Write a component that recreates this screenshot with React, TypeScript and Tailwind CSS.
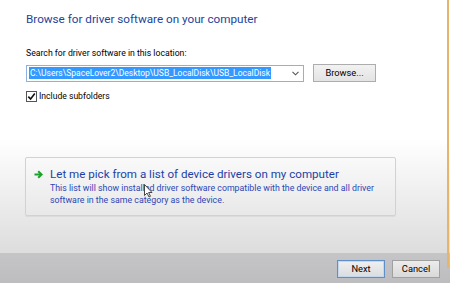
export default function App() {
  return (
    <div
      className="relative flex h-[283px] w-[450px] flex-col overflow-hidden"
      style={{ fontFamily: 'Roboto, "Noto Sans", sans-serif' }}
    >
      <div className="flex flex-1 flex-col bg-gradient-to-b from-white from-55% to-[#dddddd] pl-[26px] pr-[4px]">
        <h1 className="mt-[10px] text-[11.7px] leading-[18px] text-[#24439a]">
          Browse for driver software on your computer
        </h1>

        <p className="mt-[19px] text-[8.7px] leading-[12px] text-black">
          Search for driver software in this location:
        </p>

        <div className="mt-[5px] flex items-center gap-[9px]">
          <div className="flex h-[17px] w-[278px] items-center border border-[#8fb1e0] bg-white pl-[2px] pr-[4px]">
            <span className="bg-[#3399ff] px-[1px] text-[8.5px] leading-[12px] text-white">
              C:\Users\SpaceLover2\Desktop\USB_LocalDisk\USB_LocalDisk
            </span>
            <svg className="ml-auto" width="7" height="5" viewBox="0 0 7 5">
              <path d="M0.5 0.8 L3.5 3.8 L6.5 0.8" fill="none" stroke="#555" strokeWidth="1.1" />
            </svg>
          </div>
          <button className="flex h-[18px] w-[63px] items-center justify-center border border-[#adadad] bg-gradient-to-b from-[#f2f2f2] to-[#e3e3e3] text-[9.3px] text-black">
            Browse...
          </button>
        </div>

        <label className="mt-[8px] flex items-center gap-[2px] text-[8.6px] leading-[12px] text-black">
          <span className="flex h-[11px] w-[11px] items-center justify-center border border-[#555] bg-white">
            <svg width="9" height="9" viewBox="0 0 9 9">
              <path d="M1.3 4.6 L3.6 7 L7.8 1.6" fill="none" stroke="#111" strokeWidth="1.6" />
            </svg>
          </span>
          Include subfolders
        </label>

        <div className="-ml-[1px] mt-[55px] flex h-[59px] w-[371px] gap-[7px] rounded-[2px] border border-[#d2d2d2] pl-[8px] pt-[8px] shadow-[0_1px_1px_rgba(0,0,0,0.06)]">
          <svg className="mt-[4px] shrink-0" width="9" height="9" viewBox="0 0 9 9">
            <path d="M0.5 4.5 H7" stroke="#1aa12a" strokeWidth="2" />
            <path d="M4.2 1.2 L7.6 4.5 L4.2 7.8" fill="none" stroke="#1aa12a" strokeWidth="2" />
          </svg>
          <div className="flex flex-col">
            <span className="text-[11.6px] leading-[16px] text-[#1c3fa7]">
              Let me pick from a list of device drivers on my computer
            </span>
            <span className="whitespace-nowrap text-[8.8px] leading-[12px] text-[#2c45b5]">
              This list will show installed driver software compatible with the device and all driver
              <br />
              software in the same category as the device.
            </span>
          </div>
        </div>
      </div>

      <div className="flex h-[30px] items-center justify-end gap-[7px] border-t border-[#c6c6c6] bg-gradient-to-b from-[#c5c4c6] to-[#bdbcbe] pr-[10px]">
        <button className="h-[18px] w-[48px] border border-[#5f8fc6] bg-gradient-to-b from-[#eef0f2] to-[#dadcde] text-[9.3px] text-black shadow-[inset_0_0_0_1px_#c2d8f0]">
          Next
        </button>
        <button className="h-[18px] w-[48px] border border-[#a0a0a0] bg-gradient-to-b from-[#ececec] to-[#d9d9d9] text-[9.3px] text-black">
          Cancel
        </button>
      </div>

      <div className="absolute right-[1px] top-0 h-[268px] w-[2px] bg-[#e6b56a]" />

      <svg className="absolute left-[144px] top-[184px]" width="9" height="14" viewBox="0 0 9 14">
        <path d="M0.5 0.5 V11.5 L3 9 L5 13 L6.5 12.3 L4.6 8.5 H8 Z" fill="white" stroke="#333" strokeWidth="0.9" />
      </svg>
    </div>
  );
}
